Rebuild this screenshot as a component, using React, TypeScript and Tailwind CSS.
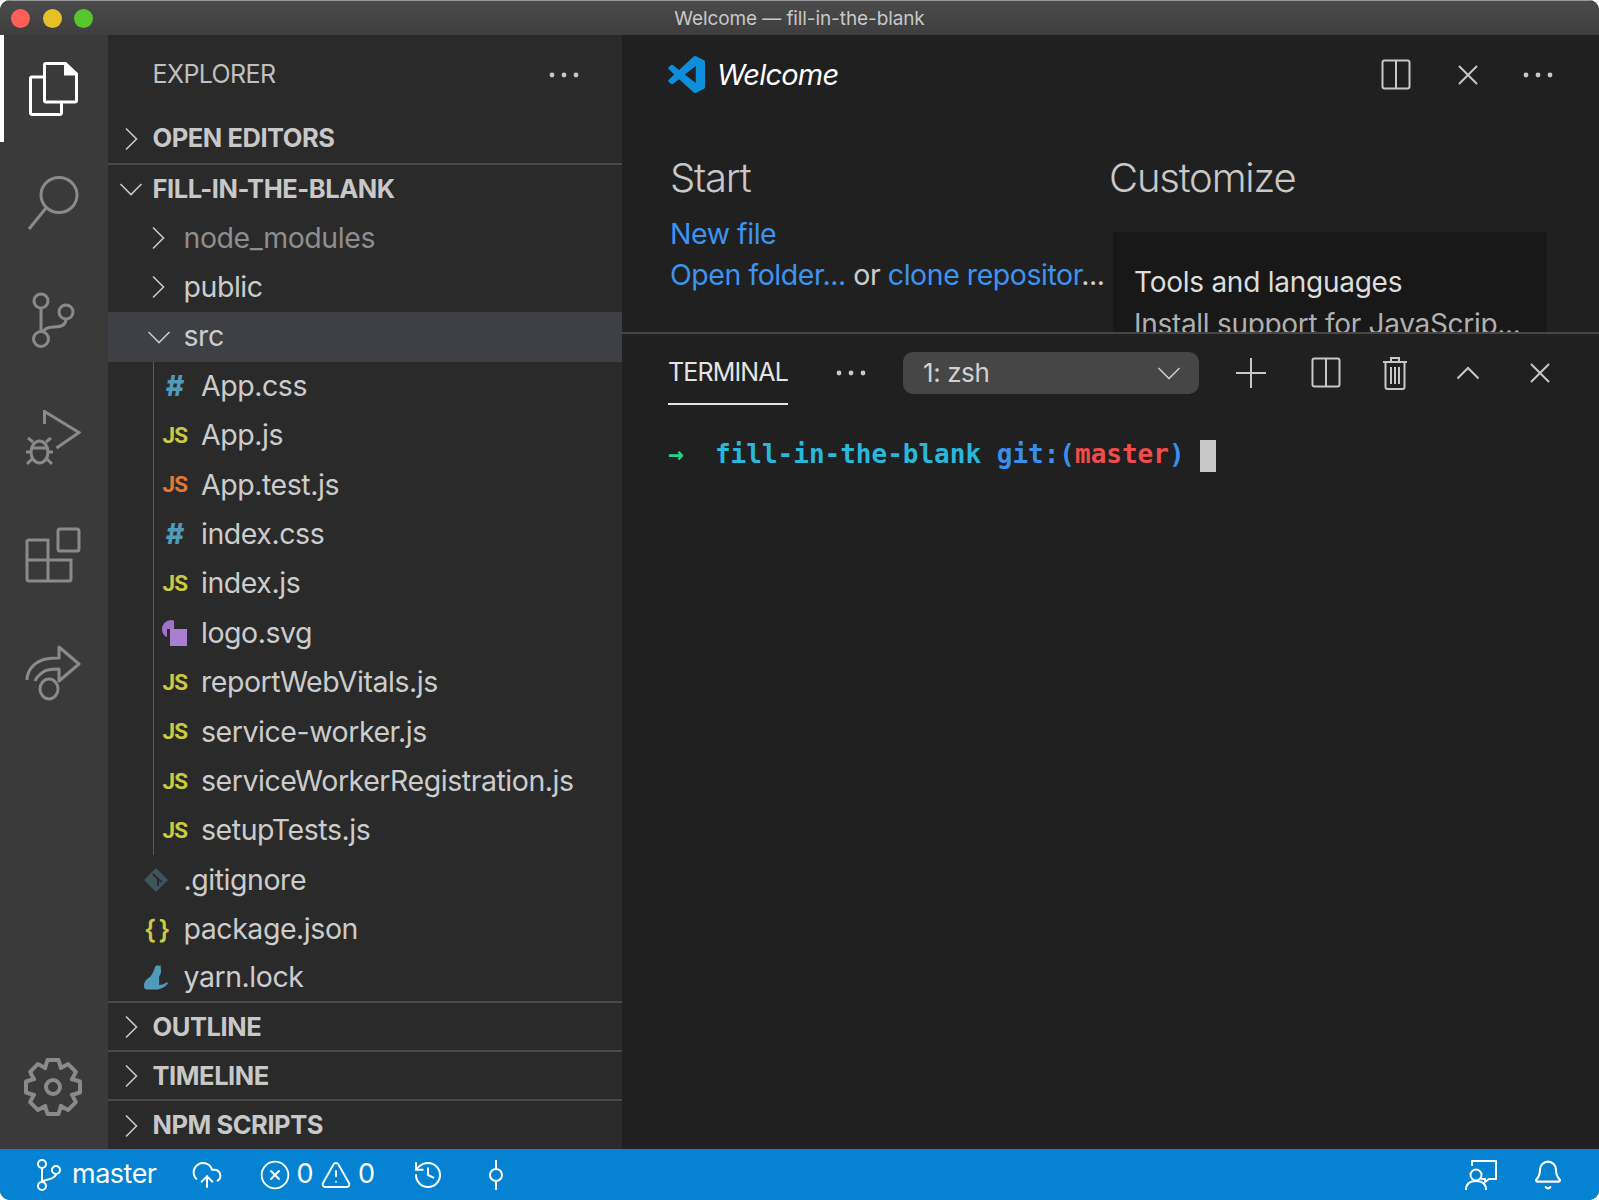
import { CircleX, TriangleAlert, History, CloudUpload, Bell } from 'lucide-react';

const gearPath = () => {
    // 8 square teeth round the wheel
    const pts: string[] = [];
    const cx = 30;
    const cy = 30;
    for (let i = 0; i < 8; i++) {
        const a = (i * Math.PI) / 4 - Math.PI / 2;
        const spread = [
            [20.5, -0.4],
            [27.5, -0.2],
            [27.5, 0.2],
            [20.5, 0.4],
        ];
        spread.forEach(([r, d]) => {
            pts.push(`${(cx + r * Math.cos(a + d)).toFixed(1)} ${(cy + r * Math.sin(a + d)).toFixed(1)}`);
        });
    }
    return `M${pts.join(' L')} Z`;
};

function ChevronRight({ className = '' }: { className?: string }) {
    return (
        <svg width="14" height="24" viewBox="0 0 14 24" fill="none" stroke="#c8c8c8" strokeWidth="1.6" className={className}>
            <path d="M2 1.5 12.5 12 2 22.5" />
        </svg>
    );
}

function ChevronDown({ className = '' }: { className?: string }) {
    return (
        <svg width="24" height="14" viewBox="0 0 24 14" fill="none" stroke="#c8c8c8" strokeWidth="1.6" className={className}>
            <path d="M1.5 2 12 12.5 22.5 2" />
        </svg>
    );
}

function SplitIcon() {
    return (
        <svg width="30" height="31" viewBox="0 0 30 31" fill="none" stroke="#c8c8c8" strokeWidth="2">
            <rect x="1.5" y="1.5" width="27" height="28" rx="2" />
            <path d="M15 1.5v28" />
        </svg>
    );
}

function CloseIcon() {
    return (
        <svg width="22" height="22" viewBox="0 0 22 22" fill="none" stroke="#c8c8c8" strokeWidth="2">
            <path d="M2 2l18 18M20 2 2 20" />
        </svg>
    );
}

function Dots({ color = '#c8c8c8' }: { color?: string }) {
    return (
        <svg width="30" height="6" viewBox="0 0 30 6" fill={color}>
            <circle cx="3" cy="3" r="2.4" />
            <circle cx="15" cy="3" r="2.4" />
            <circle cx="27" cy="3" r="2.4" />
        </svg>
    );
}

function ActivityBar() {
    return (
        <div className="w-[108px] shrink-0 bg-[#3a3a3a] flex flex-col">
            <div className="h-[107px] border-l-4 border-white pr-[6px] flex items-center justify-center">
                <svg width="52" height="58" viewBox="0 0 52 58" fill="none" stroke="#ffffff" strokeWidth="3">
                    <path d="M19 3.5h19.5L49.5 14v26.5a1.5 1.5 0 0 1-1.5 1.5H19a1.5 1.5 0 0 1-1.5-1.5V5a1.5 1.5 0 0 1 1.5-1.5Z" />
                    <path d="M38.5 3.5V14h11" fill="#ffffff" />
                    <path d="M17.5 17H5a1.5 1.5 0 0 0-1.5 1.5V53A1.5 1.5 0 0 0 5 54.500h28a1.500 1.500 0 0 0 1.500-1.500V42" />
                </svg>
            </div>
            <div className="mt-[2px] h-[117.5px] border-l-4 border-transparent pr-[6px] flex items-center justify-center">
                <svg width="54" height="58" viewBox="0 0 54 58" fill="none" stroke="#8a8a8a" strokeWidth="3">
                    <ellipse cx="33" cy="21" rx="18" ry="17.500" />
                    <path d="M20 34 3 55" />
                </svg>
            </div>
            <div className="h-[117.5px] border-l-4 border-transparent pr-[6px] flex items-center justify-center">
                <svg width="46" height="58" viewBox="0 0 46 58" fill="none" stroke="#8a8a8a" strokeWidth="3">
                    <circle cx="11" cy="10" r="7" />
                    <circle cx="36" cy="21" r="7" />
                    <circle cx="11" cy="48" r="7.500" />
                    <path d="M11 17v24M36 28c0 7-6 8-12 8-6 0-10 1-11 6" />
                </svg>
            </div>
            <div className="h-[117.5px] border-l-4 border-transparent pr-[6px] flex items-center justify-center">
                <svg width="56" height="56" viewBox="0 0 56 56" fill="none" stroke="#8a8a8a" strokeWidth="3">
                    <path d="M19.500 14V1.500L54 22.500 31.500 38" />
                    <ellipse cx="14.500" cy="42" rx="8.500" ry="11" />
                    <path d="M6 38h17M8 32 3 28M21 32l5-4M6 42H1M23 42h5M7 49l-5 5M22 49l5 5" />
                </svg>
            </div>
            <div className="h-[117.5px] border-l-4 border-transparent pr-[6px] flex items-center justify-center">
                <svg width="56" height="56" viewBox="0 0 56 56" fill="none" stroke="#8a8a8a" strokeWidth="3">
                    <rect x="33" y="2" width="21" height="22" rx="2" />
                    <path d="M23 33V13H4a2 2 0 0 0-2 2v37a2 2 0 0 0 2 2h40a2 2 0 0 0 2-2V33ZM23 33v21M2 33h21" />
                </svg>
            </div>
            <div className="h-[117.500px] border-l-4 border-transparent pr-[6px] flex items-center justify-center">
                <svg width="56" height="56" viewBox="0 0 56 56" fill="none" stroke="#8a8a8a" strokeWidth="3">
                    <path d="M2 35c0-11 9-19 19-21 5-1 10-1 13-1V2l20 17-20 17V24c-6 0-12 0-16 3-4 3-7 6-8 9" strokeLinejoin="round" />
                    <ellipse cx="24" cy="44" rx="9" ry="10" />
                </svg>
            </div>
            <div className="mt-auto mb-[32px] border-l-4 border-transparent pr-[6px] flex items-center justify-center">
                <svg width="60" height="60" viewBox="0 0 60 60" fill="none" stroke="#8a8a8a" strokeWidth="4" strokeLinejoin="round">
                    <path d={gearPath()} />
                    <circle cx="30" cy="30" r="7" />
                </svg>
            </div>
        </div>
    );
}

function SectionRow({ label, open = false, h = 'h-[47px]' }: { label: string; open?: boolean; h?: string }) {
    return (
        <div className={`${h} shrink-0 flex items-center`}>
            <div className="w-[44.500px] flex justify-center shrink-0">
                {open ? <ChevronDown className="ml-[1px]" /> : <ChevronRight className="ml-[1px]" />}
            </div>
            <span className="text-[25.5px] font-bold text-[#c8c8c8] tracking-[-0.45px]">{label}</span>
        </div>
    );
}

function JsIcon({ color = '#cbcb41' }: { color?: string }) {
    return (
        <span className="w-[24px] text-center font-['Roboto'] text-[22.5px] font-bold tracking-[-0.8px]" style={{ color }}>
            JS
        </span>
    );
}

function HashIcon() {
    return <span className="w-[24px] text-center text-[28px] font-extrabold italic text-[#519aba]">#</span>;
}

function LogoIcon() {
    return (
        <svg width="27" height="28" viewBox="0 0 27 28">
            <path d="M10 1a9 9 0 0 0-9 9c0 4 2 7 5 8V10h7V1.500A9 9 0 0 0 10 1Z" fill="#a074c4" />
            <rect x="9" y="10" width="17" height="17" fill="#a97fd2" />
        </svg>
    );
}

const srcFiles = [
    { name: 'App.css', icon: <HashIcon /> },
    { name: 'App.js', icon: <JsIcon /> },
    { name: 'App.test.js', icon: <JsIcon color="#e37933" /> },
    { name: 'index.css', icon: <HashIcon /> },
    { name: 'index.js', icon: <JsIcon /> },
    { name: 'logo.svg', icon: <LogoIcon /> },
    { name: 'reportWebVitals.js', icon: <JsIcon /> },
    { name: 'service-worker.js', icon: <JsIcon /> },
    { name: 'serviceWorkerRegistration.js', icon: <JsIcon /> },
    { name: 'setupTests.js', icon: <JsIcon /> },
];

function Sidebar() {
    return (
        <div className="w-[514px] shrink-0 bg-[#2a2a2a] flex flex-col">
            <div className="h-[79px] shrink-0 flex items-center justify-between pl-[44.500px] pr-[43px]">
                <span className="text-[25px] text-[#c0c0c0] tracking-[-0.6px]">EXPLORER</span>
                <Dots />
            </div>
            <SectionRow label="OPEN EDITORS" h="h-[49px]" />
            <div className="h-[2px] shrink-0 bg-[#4a4a4a]" />

            <SectionRow label="FILL-IN-THE-BLANK" open h="h-[48.400px]" />
            <div className="h-[49.400px] shrink-0 flex items-center text-[28.500px] tracking-[-0.45px] text-[#8e8e8e]">
                <div className="w-[75.500px] flex justify-end pr-[19px] shrink-0">
                    <ChevronRight />
                </div>
                node_modules
            </div>
            <div className="h-[49.400px] shrink-0 flex items-center text-[28.500px] tracking-[-0.45px] text-[#cccccc]">
                <div className="w-[75.500px] flex justify-end pr-[19px] shrink-0">
                    <ChevronRight />
                </div>
                public
            </div>
            <div className="h-[49.400px] shrink-0 flex items-center text-[28.500px] tracking-[-0.45px] text-[#cccccc] bg-[#3f3f46]">
                <div className="w-[75.500px] flex justify-end pr-[13px] shrink-0">
                    <ChevronDown />
                </div>
                src
            </div>
            <div className="ml-[45px] border-l border-[#5c5c5c] shrink-0">
                {srcFiles.map((file) => (
                    <div key={file.name} className="h-[49.400px] flex items-center text-[28.500px] tracking-[-0.45px] text-[#cccccc]">
                        <div className="w-[47px] pr-[6px] flex justify-center shrink-0">{file.icon}</div>
                        {file.name}
                    </div>
                ))}
            </div>
            <div className="h-[49.400px] shrink-0 flex items-center text-[28.500px] tracking-[-0.45px] text-[#cccccc]">
                <div className="w-[75.500px] pl-[33px] pr-[12px] flex justify-center shrink-0">
                    <svg width="26" height="26" viewBox="0 0 26 26" className="shrink-0">
                        <path d="M13 1 25 13 13 25 1 13Z" fill="#41535b" />
                        <path d="M10 7l5 5v7M15 12l4 3" stroke="#2a2a2a" strokeWidth="2" fill="none" />
                    </svg>
                </div>
                .gitignore
            </div>
            <div className="h-[49.400px] shrink-0 flex items-center text-[28.500px] tracking-[-0.45px] text-[#cccccc]">
                <div className="w-[75.500px] pl-[33px] pr-[12px] flex justify-center shrink-0">
                    <span className="text-[26px] font-semibold text-[#cbcb41] whitespace-pre tracking-[-2px]">{'{ }'}</span>
                </div>
                package.json
            </div>
            <div className="h-[47px] shrink-0 flex items-center text-[28.500px] tracking-[-0.45px] text-[#cccccc]">
                <div className="w-[75.500px] pl-[33px] pr-[12px] flex justify-center shrink-0">
                    <svg width="24" height="25" viewBox="0 0 24 25" className="shrink-0" fill="#519aba">
                        <path d="M11 2 13 0l2 1 1.500-1L17 6c0 3-1 4-2 6 0 3 .5 5 0 8 3 0 6-1 8-3l1 1.500c-3 3.500-7 6-12 6H3c-2 0-3-1.500-3-3.500 0-5 3-7 6-9 2-2 3-5 4-7Z" />
                    </svg>
                </div>
                yarn.lock
            </div>

            <div className="h-[2px] shrink-0 bg-[#4a4a4a]" />
            <SectionRow label="OUTLINE" />
            <div className="h-[2px] shrink-0 bg-[#4a4a4a]" />
            <SectionRow label="TIMELINE" />
            <div className="h-[2px] shrink-0 bg-[#4a4a4a]" />
            <SectionRow label="NPM SCRIPTS" h="h-[48.600px]" />
        </div>
    );
}

function EditorArea() {
    return (
        <div className="h-[297px] shrink-0 overflow-hidden">
            <div className="h-[79px] flex items-center justify-between pl-[46px] pr-[46px]">
                <div className="flex items-center gap-[12px]">
                    <svg width="37" height="37" viewBox="0 0 100 100" fill="#0e8fdc">
                        <path d="M96.460 10.800 75.860.870a6.230 6.230 0 0 0-7.100 1.200L29.900 37.500 12.970 24.600a4.160 4.160 0 0 0-5.320.240L2.200 29.800a4.170 4.170 0 0 0 0 6.160L16.900 50 2.200 64.030a4.170 4.170 0 0 0 0 6.160l5.450 4.960a4.160 4.160 0 0 0 5.320.240L29.900 62.500l38.850 35.430a6.220 6.220 0 0 0 7.100 1.200l20.600-9.910A6.250 6.250 0 0 0 100 83.600V16.400a6.250 6.250 0 0 0-3.540-5.600ZM75 72.700 45.500 50 75 27.300Z" />
                    </svg>
                    <span className="text-[29px] italic text-white tracking-[-0.8px]">Welcome</span>
                </div>
                <div className="flex items-center">
                    <SplitIcon />
                    <div className="ml-[46px]">
                        <CloseIcon />
                    </div>
                    <div className="ml-[44px]">
                        <Dots />
                    </div>
                </div>
            </div>
            <div className="flex mt-[36px]">
                <div className="w-[487px] shrink-0 pl-[48px]">
                    <h2 className="text-[40px] leading-[56px] font-light text-[#c8c8c8] tracking-[-1.2px]">Start</h2>
                    <div className="mt-[7px] text-[28.500px] leading-[41px] tracking-[-0.45px] text-[#3d94f0]">New file</div>
                    <div className="text-[28.500px] leading-[41px] tracking-[-0.45px] whitespace-nowrap text-[#cccccc]">
                        <span className="text-[#3d94f0]">Open folder...</span> or{' '}
                        <span className="text-[#3d94f0]">clone repositor</span>...
                    </div>
                </div>
                <div className="flex-1 min-w-0 pr-[52px]">
                    <h2 className="text-[40px] leading-[56px] font-light text-[#c8c8c8] tracking-[-1.2px]">Customize</h2>
                    <div className="ml-[4px] mt-[26px] h-[120px] bg-[#181818] pl-[21px] pt-[29px]">
                        <div className="text-[28px] leading-[42px] tracking-[-0.25px] text-[#dddddd] whitespace-nowrap">Tools and languages</div>
                        <div className="text-[28px] leading-[42px] tracking-[-0.3px] text-[#b0b0b0] whitespace-nowrap">Install support for JavaScrip...</div>
                    </div>
                </div>
            </div>
        </div>
    );
}

function TerminalPanel() {
    return (
        <div className="flex-1 min-h-0 flex flex-col">
            <div className="h-[71px] shrink-0 flex items-center pt-[6px] pl-[46px] pr-[49px]">
                <div className="relative h-[65px] shrink-0 flex items-center">
                    <span className="text-[25px] text-[#e4e4e4] tracking-[-0.85px]">TERMINAL</span>
                    <div className="absolute left-0 right-0 bottom-0 h-[2px] bg-[#e4e4e4]" />
                </div>
                <div className="ml-[48px]">
                    <Dots />
                </div>
                <div className="ml-[37px] w-[296px] shrink-0 h-[42px] bg-[#464646] rounded-[10px] flex items-center justify-between pl-[20px] pr-[18px]">
                    <span className="text-[26px] tracking-[-0.4px] text-[#d0d0d0]">1: zsh</span>
                    <ChevronDown />
                </div>
                <svg width="32" height="32" viewBox="0 0 32 32" stroke="#c8c8c8" strokeWidth="2" className="ml-[36px] shrink-0">
                    <path d="M16 1v30M1 16h30" />
                </svg>
                <div className="ml-[44px]">
                    <SplitIcon />
                </div>
                <svg width="26" height="34" viewBox="0 0 26 34" fill="none" stroke="#c8c8c8" strokeWidth="2" className="ml-[41px] shrink-0">
                    <path d="M1 6h24M9 6V2h8v4M3.500 6v25a2 2 0 0 0 2 2h15a2 2 0 0 0 2-2V6M9 11v17M13 11v17M17 11v17" />
                </svg>
                <svg width="24" height="14" viewBox="0 0 24 14" fill="none" stroke="#c8c8c8" strokeWidth="2" className="ml-[48px] shrink-0">
                    <path d="M1.500 12.500 12 2l10.500 10.500" />
                </svg>
                <div className="ml-[49px]">
                    <CloseIcon />
                </div>
            </div>
            <div className="mt-[31px] pl-[46px] font-['DejaVu_Sans_Mono'] font-bold text-[26px] leading-[32px] whitespace-pre text-[#3b8eea] flex items-center">
                <span className="text-[#23d18b]">→</span>
                <span>{'  '}</span>
                <span className="text-[#29b8db]">fill-in-the-blank</span>
                <span> git:(</span>
                <span className="text-[#f14c4c]">master</span>
                <span>) </span>
                <span className="inline-block w-[15.650px] h-[32px] mt-[4px] bg-[#c8c8c8]" />
            </div>
        </div>
    );
}

function StatusBar() {
    return (
        <div className="h-[51px] shrink-0 bg-[#0583d2] flex items-center text-white text-[27px] tracking-[-0.5px]">
            <svg width="26" height="32" viewBox="0 0 26 32" fill="none" stroke="#ffffff" strokeWidth="2" className="ml-[36px]">
                <circle cx="6" cy="5" r="4" />
                <circle cx="20" cy="11" r="4" />
                <circle cx="6" cy="27" r="4" />
                <path d="M6 9v14M20 15c0 4-6 5-10 6-2 .5-3 1-4 2" />
            </svg>
            <span className="ml-[10px]">master</span>
            <CloudUpload size={32} strokeWidth={1.5} className="ml-[34px]" />
            <CircleX size={32} strokeWidth={1.4} className="ml-[36px]" />
            <span className="ml-[6px]">0</span>
            <TriangleAlert size={32} strokeWidth={1.4} className="ml-[7px]" />
            <span className="ml-[6px]">0</span>
            <History size={32} strokeWidth={1.5} className="ml-[37px]" />
            <svg width="16" height="30" viewBox="0 0 16 30" fill="none" stroke="#ffffff" strokeWidth="2" className="ml-[44px]">
                <circle cx="8" cy="15" r="6" />
                <path d="M8 0v9M8 21v9" />
            </svg>
            <svg width="32" height="32" viewBox="0 0 32 32" fill="none" stroke="#ffffff" strokeWidth="2" className="ml-auto">
                <path d="M7 7V2h24v18h-7l-4 3v-3h-4" strokeLinejoin="round" />
                <circle cx="11" cy="16" r="5.500" />
                <path d="M1 31c0-6 4-9 10-9s10 3 10 9" />
            </svg>
            <Bell size={32} strokeWidth={1.6} className="ml-[35px] mr-[35px]" />
        </div>
    );
}

export default function App() {
    return (
        <div className="w-[1599px] h-[1200px] overflow-hidden rounded-[10px] bg-[#202020] flex flex-col font-['Inter',sans-serif]">
            {/* Title bar */}
            <div className="h-[35px] shrink-0 flex items-center border-t border-[#9a9a9a] bg-gradient-to-b from-[#4b4b4b] to-[#3e3e3e]">
                <div className="flex-1 flex items-center gap-[12.500px]">
                    <span className="ml-[11px] w-[19px] h-[19px] rounded-full bg-[#ff5f57]" />
                    <span className="w-[19px] h-[19px] rounded-full bg-[#e6c029]" />
                    <span className="w-[19px] h-[19px] rounded-full bg-[#58c52f]" />
                </div>
                <span className="mt-[2px] text-[19px] tracking-[-0.1px] text-[#c8c8c8] whitespace-nowrap">Welcome — fill-in-the-blank</span>
                <div className="flex-1" />
            </div>

            <div className="flex-1 min-h-0 flex">
                <ActivityBar />
                <Sidebar />
                <div className="flex-1 min-w-0 flex flex-col bg-[#202020]">
                    <EditorArea />
                    <div className="h-[2px] shrink-0 bg-[#474747]" />
                    <TerminalPanel />
                </div>
            </div>

            <StatusBar />
        </div>
    );
}
